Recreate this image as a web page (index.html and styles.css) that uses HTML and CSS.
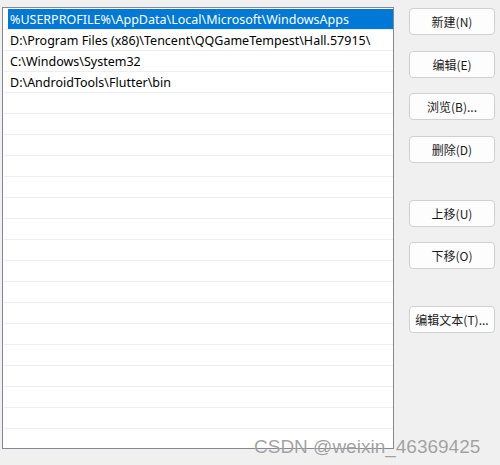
FILE: index.html
```html
<!DOCTYPE html>
<html lang="zh-CN">
<head>
    <meta charset="UTF-8">
    <meta name="viewport" content="width=device-width, initial-scale=1.0">
    <title>编辑环境变量</title>
    <link rel="stylesheet" href="styles.css">
</head>
<body>
    <div class="dialog">
        <div class="path-list">
            <div class="row selected"><span class="cell">%USERPROFILE%\AppData\Local\Microsoft\WindowsApps</span></div>
            <div class="row"><span class="cell">D:\Program Files (x86)\Tencent\QQGameTempest\Hall.57915\</span></div>
            <div class="row"><span class="cell">C:\Windows\System32</span></div>
            <div class="row"><span class="cell">D:\AndroidTools\Flutter\bin</span></div>
            <div class="row"></div>
            <div class="row"></div>
            <div class="row"></div>
            <div class="row"></div>
            <div class="row"></div>
            <div class="row"></div>
            <div class="row"></div>
            <div class="row"></div>
            <div class="row"></div>
            <div class="row"></div>
            <div class="row"></div>
            <div class="row"></div>
            <div class="row"></div>
            <div class="row"></div>
            <div class="row"></div>
            <div class="row"></div>
            <div class="row"></div>
        </div>

        <div class="actions">
            <button class="btn">新建(N)</button>
            <button class="btn">编辑(E)</button>
            <button class="btn tight">浏览(B)...</button>
            <button class="btn">删除(D)</button>
            <button class="btn far">上移(U)</button>
            <button class="btn tight">下移(O)</button>
            <button class="btn far">编辑文本(T)...</button>
        </div>
    </div>

    <div class="watermark">CSDN @weixin_46369425</div>
</body>
</html>
```

FILE: styles.css
```css
:root {
    --fundo: #f0f0f0;
    --borda: #828790;
    --linha: #efefef;
    --azul: #0078d7;
    --texto: #000000;
}

* {
    margin: 0;
    padding: 0;
    box-sizing: border-box;
}

body {
    background-color: var(--fundo);
    color: var(--texto);
    font-family: "Noto Sans", "Noto Sans CJK SC", sans-serif;
    font-size: 12px;
    width: 500px;
    height: 465px;
    overflow: hidden;
    position: relative;
}

.dialog {
    display: flex;
    align-items: flex-start;
    padding: 7px 0 0 2px;
}

/* lista de caminhos */
.path-list {
    width: 392px;
    height: 442px;
    background-color: #ffffff;
    border: 1px solid var(--borda);
    padding: 1px 0 0 1px;
    overflow: hidden;
}

.row {
    height: 21px;
    border-bottom: 1px solid var(--linha);
}

.cell {
    display: block;
    height: 20px;
    line-height: 20px;
    margin-left: 4px;
    padding: 1px 0 0 2px;
    font-size: 12.5px;
    white-space: nowrap;
}

.row.selected .cell {
    background-color: var(--azul);
    color: #ffffff;
}

/* botões */
.actions {
    display: flex;
    flex-direction: column;
    margin-left: 15px;
    padding-top: 1px;
}

.btn {
    width: 86px;
    height: 27px;
    margin-top: 16px;
    background-color: #fdfdfd;
    border: 1px solid #d0d0d0;
    border-radius: 4px;
    font-family: "Noto Sans CJK SC", "Noto Sans", sans-serif;
    font-size: 12px;
    color: #1b1b1b;
}

.btn:first-child {
    margin-top: 0;
}

.btn.tight {
    margin-top: 15px;
}

.btn.far {
    margin-top: 37px;
}

.watermark {
    position: absolute;
    left: 254px;
    top: 436px;
    font-family: "Liberation Sans", Arial, sans-serif;
    font-size: 19px;
    color: rgba(120, 120, 120, 0.7);
    text-shadow: 0 0 1px rgba(255, 255, 255, 0.8);
    white-space: nowrap;
}
```
